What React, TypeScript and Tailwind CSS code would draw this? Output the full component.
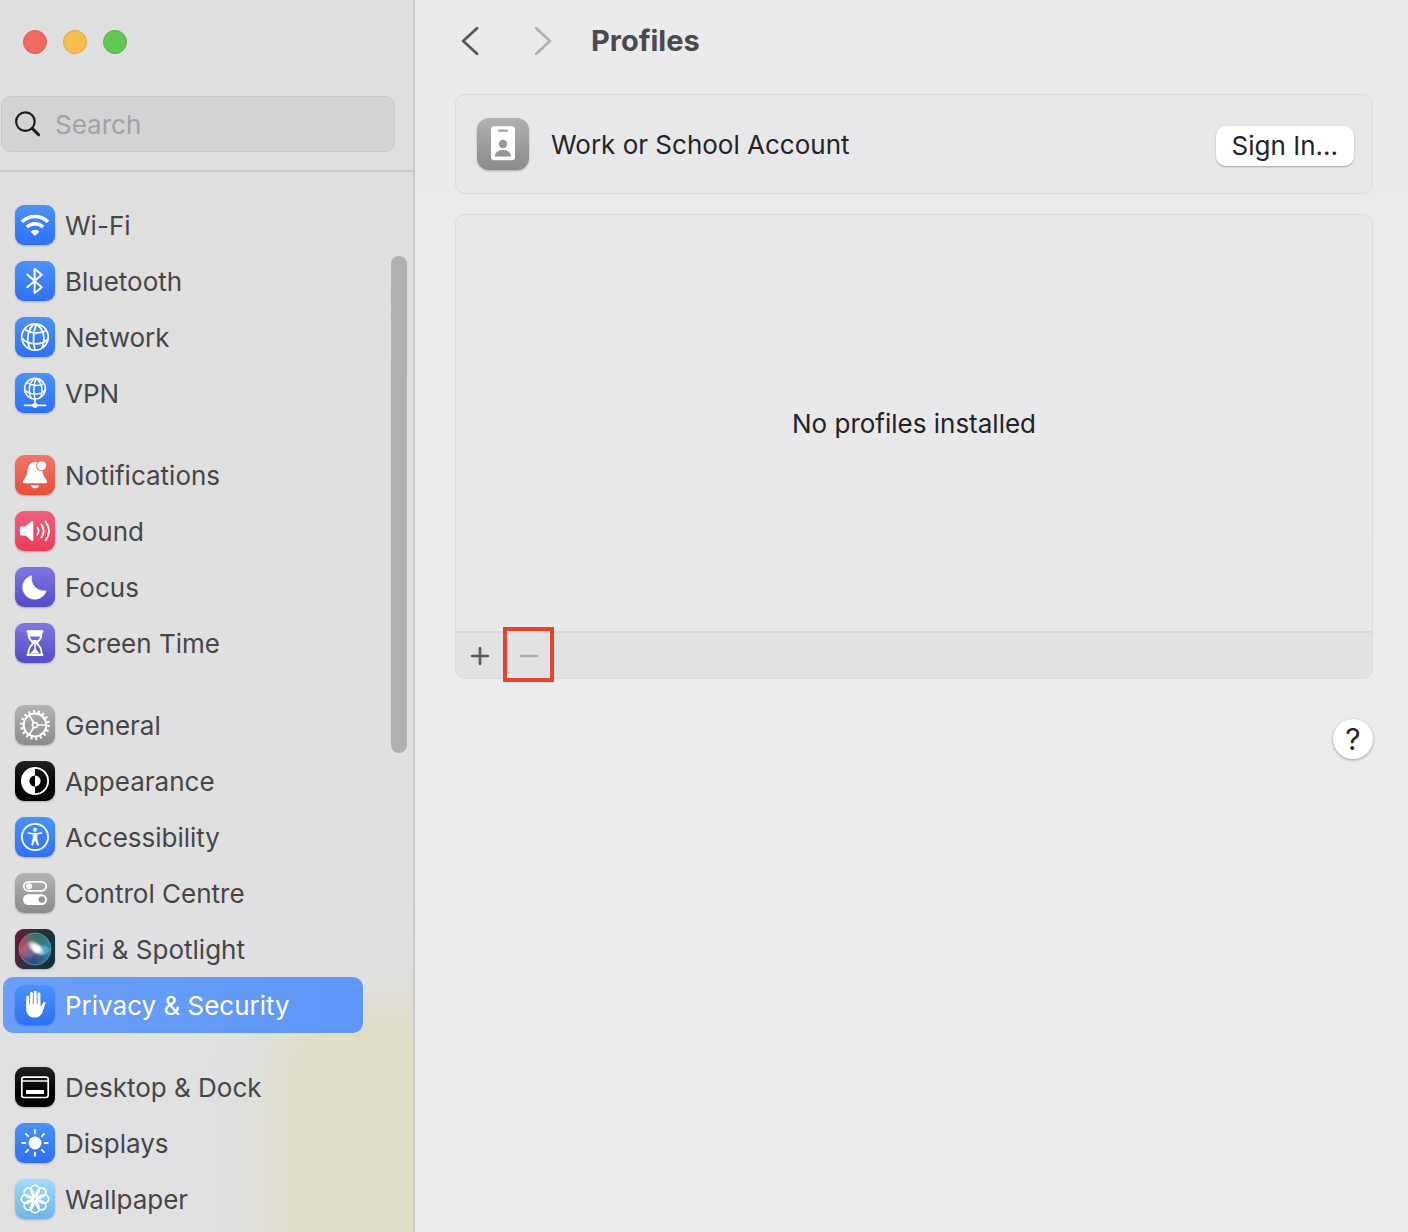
import { FC, ReactNode } from "react";
import clsx from "clsx";

type Item = {
  label: string;
  tile: string;
  icon: ReactNode;
  active?: boolean;
};

const BLUE = "bg-linear-to-b from-[#4b92f8] to-[#2f70f2]";
const GRAY = "bg-linear-to-b from-[#b3b3b3] to-[#8b8b8c]";
const BLACK = "bg-linear-to-b from-[#232324] to-[#000000]";
const PURPLE = "bg-linear-to-b from-[#7f78e2] to-[#524cc6]";

const GlobeLines: FC = () => (
  <>
    <circle cx="20" cy="20" r="13.2" />
    <path d="M19.6 7.2C12.6 11 10.6 24 15.4 32.2M21.8 7.2C18 13 17.6 27 20.4 33M21.4 7.2C29.4 12 31 24 26.2 31.8" />
    <path d="M9.5 12C15 16.4 25 17.4 31.5 13.4M7 21.4C13 28 27 29.2 33 21.6" />
  </>
);

const WifiIcon = (
  <>
    <path d="M7 16.8A18.6 18.6 0 0 1 33 16.8M11.9 22A11.6 11.6 0 0 1 28.1 22" fill="none" stroke="#fff" strokeWidth="3.5" />
    <path d="M20 31L15.6 26.7A6 6 0 0 1 24.4 26.7Z" fill="#fff" />
  </>
);

const BluetoothIcon = (
  <path d="M12.3 13.6L26.7 26.3L19.6 32.2V7.8L26.7 13.7L12.3 26.3" fill="none" stroke="#fff" strokeWidth="2" strokeLinecap="round" strokeLinejoin="round" />
);

const NetworkIcon = (
  <g fill="none" stroke="#fff" strokeWidth="1.7">
    <GlobeLines />
  </g>
);

const VpnIcon = (
  <>
    <g fill="none" stroke="#fff" strokeWidth="1.9" transform="translate(4.2 -.2) scale(.79)">
      <GlobeLines />
    </g>
    <path d="M20 26V32M9.5 32.4H30.5" stroke="#fff" strokeWidth="1.7" strokeLinecap="round" />
    <circle cx="20" cy="32.3" r="2.6" fill="#fff" />
  </>
);

const BellIcon = (
  <>
    <path d="M20 7C15 7 12.8 11 12.6 16C12.3 22 8 23.6 8 26.9C8 27.8 8.6 28.3 9.5 28.3H30.5C31.4 28.3 32 27.8 32 26.9C32 23.6 28 22 27.4 16C27 11 25 7 20 7Z" fill="#fff" />
    <path d="M16 30.2H24C23.6 32.2 22 33.3 20 33.3S16.4 32.2 16 30.2Z" fill="#fff" />
    <circle cx="26.6" cy="10.8" r="5.5" fill="#ee6a5b" />
    <circle cx="26.6" cy="10.8" r="4.5" fill="#fff" />
  </>
);

const SoundIcon = (
  <>
    <path d="M6.4 15.6H10.4L16.6 10.2C17.4 9.6 18.3 10 18.3 11V29C18.3 30 17.4 30.4 16.6 29.8L10.4 24.4H6.4C5.6 24.4 5 23.9 5 23V17C5 16.1 5.6 15.6 6.4 15.6Z" fill="#fff" />
    <path d="M22.4 16.4Q24.8 20 22.4 23.6M26.4 13.6Q31 20 26.4 26.4M30.6 10.6Q37.4 20 30.6 29.4" fill="none" stroke="#fff" strokeWidth="1.8" strokeLinecap="round" />
  </>
);

const MoonIcon = (
  <path d="M16.6 8.7A12 12 0 1 0 31.2 23.7A12.6 12.6 0 0 1 16.6 8.7Z" fill="#fff" stroke="#fff" strokeWidth=".6" strokeLinejoin="round" />
);

const HourglassIcon = (
  <>
    <path d="M13.4 8.4H26.6C26.6 14.5 25.5 16.3 21.6 20C25.5 24 26.6 26 26.6 31.8H13.4C13.4 26 14.5 24 18.4 20C14.5 16.3 13.4 14.5 13.4 8.4Z" fill="none" stroke="#fff" strokeWidth="1.8" />
    <path d="M12.6 8.4H27.4M12.6 31.9H27.4" stroke="#fff" strokeWidth="2.2" strokeLinecap="round" />
    <path d="M14 8.5H26V13.4H14ZM17.4 17H22.6L20.8 20V26L24.6 30.6H15.4L19.2 26V20Z" fill="#fff" />
  </>
);

const GearIcon = (
  <g fill="none" stroke="#fff">
    <circle cx="20" cy="20" r="11.4" strokeWidth="2" />
    <circle cx="20" cy="20" r="13.6" strokeWidth="2.6" strokeDasharray="2.1 2.647" />
    <circle cx="20" cy="20" r="2.6" strokeWidth="1.5" />
    <path d="M22.6 20H31M18.7 17.7L14.4 10.4M18.7 22.3L14.4 29.6" strokeWidth="1.7" />
  </g>
);

const AppearanceIcon = (
  <>
    <circle cx="20" cy="20" r="13.1" fill="none" stroke="#fff" strokeWidth="1.8" />
    <path d="M20 7A13 13 0 0 0 20 33V25.6A5.6 5.6 0 0 1 20 14.4Z" fill="#fff" />
    <path d="M20 14.4A5.6 5.6 0 0 1 20 25.6Z" fill="#fff" />
  </>
);

const AccessibilityIcon = (
  <>
    <circle cx="20" cy="20" r="13.1" fill="none" stroke="#fff" strokeWidth="1.8" />
    <circle cx="20" cy="12.8" r="2" fill="#fff" />
    <path d="M13.4 15.9L18 16.8H22L26.6 15.9" fill="none" stroke="#fff" strokeWidth="1.5" strokeLinecap="round" strokeLinejoin="round" />
    <path d="M18 16.4H22V21.4L23.6 27.9L22.4 28.4L20 22.8L17.6 28.4L16.4 27.9L18 21.4Z" fill="#fff" stroke="#fff" strokeWidth=".5" strokeLinejoin="round" />
  </>
);

const ControlIcon = (
  <>
    <rect x="8.8" y="8.8" width="22.4" height="9" rx="4.5" fill="none" stroke="#fff" strokeWidth="1.7" />
    <circle cx="14" cy="13.3" r="3.1" fill="#fff" />
    <rect x="8" y="21.2" width="24" height="10.8" rx="5.4" fill="#fff" />
    <circle cx="26.8" cy="26.6" r="3.3" fill="#969697" />
  </>
);

const SiriIcon = (
  <>
    <defs>
      <linearGradient id="siriBase" x1="0" y1="0" x2="1" y2="0.3">
        <stop offset="0" stopColor="#6b1838" />
        <stop offset=".5" stopColor="#33313f" />
        <stop offset="1" stopColor="#10333a" />
      </linearGradient>
      <linearGradient id="siriOrb" x1="0" y1=".3" x2="1" y2=".6">
        <stop offset="0" stopColor="#c2385c" />
        <stop offset=".4" stopColor="#7b6a80" />
        <stop offset=".7" stopColor="#3b8299" />
        <stop offset="1" stopColor="#2384b8" />
      </linearGradient>
      <radialGradient id="siriTop" cx=".6" cy=".05" r=".5">
        <stop offset="0" stopColor="#2b7562" />
        <stop offset="1" stopColor="#2b7562" stopOpacity="0" />
      </radialGradient>
      <radialGradient id="siriLow" cx=".45" cy=".95" r=".55">
        <stop offset="0" stopColor="#2c4288" />
        <stop offset="1" stopColor="#2c4288" stopOpacity="0" />
      </radialGradient>
      <radialGradient id="siriGlow">
        <stop offset="0" stopColor="#fff" />
        <stop offset=".45" stopColor="#fff" stopOpacity=".85" />
        <stop offset="1" stopColor="#bfeaff" stopOpacity="0" />
      </radialGradient>
    </defs>
    <rect width="40" height="40" rx="9" fill="url(#siriBase)" />
    <circle cx="20" cy="20" r="16" fill="url(#siriOrb)" />
    <circle cx="20" cy="20" r="16" fill="url(#siriTop)" />
    <circle cx="20" cy="20" r="16" fill="url(#siriLow)" />
    <circle cx="20" cy="20" r="16" fill="none" stroke="#6fae9f" strokeOpacity=".7" strokeWidth=".9" />
    <path d="M5 22C9 13 15 11 20 19C24 14 31 14 35 21C31 28 26 28 22 23C18 31 9 31 5 22Z" fill="#ff9db5" fillOpacity=".18" />
    <path d="M21 22C26 15 31 16 35 21C31 26 26 27 21 22Z" fill="#52b9ef" fillOpacity=".6" />
    <ellipse cx="21" cy="19" rx="11" ry="6" fill="url(#siriGlow)" transform="rotate(38 21 19)" />
    <circle cx="22" cy="20" r="5" fill="url(#siriGlow)" />
  </>
);

const HandIcon = (
  <>
    <path d="M12.7 12.2V22M16.4 8.4V22M20.2 7.2V22M24 9V22" stroke="#fff" strokeWidth="2.9" strokeLinecap="round" />
    <path d="M11.25 19H25.4V22.6L28.6 17.2C29.2 16.2 30.9 16.8 30.6 18L27.6 26.5C26.2 30.6 23.8 32.6 19.8 32.6C14.4 32.6 11.25 29.4 11.25 24Z" fill="#fff" />
  </>
);

const DockIcon = (
  <>
    <rect x="6.8" y="10.1" width="26.4" height="20.4" rx="2.2" fill="none" stroke="#fff" strokeWidth="1.7" />
    <path d="M7 14H33" stroke="#fff" strokeWidth="1.7" />
    <rect x="11" y="23" width="18" height="4" rx=".6" fill="#fff" />
  </>
);

const SunIcon = (
  <>
    <circle cx="20" cy="20" r="6.4" fill="#fff" />
    {[0, 45, 90, 135, 180, 225, 270, 315].map((a) => (
      <path key={a} d="M20 10.3V7.3" stroke="#fff" strokeWidth="1.9" strokeLinecap="round" transform={`rotate(${a} 20 20)`} />
    ))}
  </>
);

const FlowerIcon = (
  <g fill="none" stroke="#fff" strokeWidth="1.6">
    {[0, 45, 90, 135, 180, 225, 270, 315].map((a) => (
      <path key={a} d="M20 20C17.6 16.6 15.7 13.4 15.7 10.6A4.3 4.3 0 0 1 24.3 10.6C24.3 13.4 22.4 16.6 20 20Z" transform={`rotate(${a} 20 20)`} />
    ))}
    <circle cx="20" cy="20" r="1.8" fill="#8ac8ee" />
  </g>
);

const groups: Item[][] = [
  [
    { label: "Wi-Fi", tile: BLUE, icon: WifiIcon },
    { label: "Bluetooth", tile: BLUE, icon: BluetoothIcon },
    { label: "Network", tile: BLUE, icon: NetworkIcon },
    { label: "VPN", tile: BLUE, icon: VpnIcon },
  ],
  [
    { label: "Notifications", tile: "bg-linear-to-b from-[#f0766a] to-[#ea4b3a]", icon: BellIcon },
    { label: "Sound", tile: "bg-linear-to-b from-[#ee6080] to-[#ea3b57]", icon: SoundIcon },
    { label: "Focus", tile: PURPLE, icon: MoonIcon },
    { label: "Screen Time", tile: PURPLE, icon: HourglassIcon },
  ],
  [
    { label: "General", tile: GRAY, icon: GearIcon },
    { label: "Appearance", tile: BLACK, icon: AppearanceIcon },
    { label: "Accessibility", tile: BLUE, icon: AccessibilityIcon },
    { label: "Control Centre", tile: GRAY, icon: ControlIcon },
    { label: "Siri & Spotlight", tile: "bg-[#33313f]", icon: SiriIcon },
    { label: "Privacy & Security", tile: BLUE, icon: HandIcon, active: true },
  ],
  [
    { label: "Desktop & Dock", tile: BLACK, icon: DockIcon },
    { label: "Displays", tile: BLUE, icon: SunIcon },
    { label: "Wallpaper", tile: "bg-linear-to-b from-[#9fdcf6] to-[#70b4e6]", icon: FlowerIcon },
  ],
];

const SidebarItem: FC<{ item: Item }> = ({ item }) => (
  <li>
    <a
      href="#"
      aria-current={item.active ? "page" : undefined}
      className={clsx(
        "flex h-14 items-center gap-[10px] rounded-[10px] pl-3 text-[26px] whitespace-nowrap",
        item.active ? "bg-linear-to-r from-[#6a9ff9] to-[#5f96f8] text-white" : "text-[#464648]"
      )}
    >
      <span className={clsx("size-10 shrink-0 overflow-hidden rounded-[9px] shadow-[0_1px_2px_rgba(0,0,0,0.22)]", item.tile)}>
        <svg viewBox="0 0 40 40" className="size-10" aria-hidden="true">
          {item.icon}
        </svg>
      </span>
      {item.label}
    </a>
  </li>
);

const Sidebar: FC = () => (
  <aside className="relative isolate flex w-[415px] shrink-0 flex-col overflow-hidden border-r-2 border-[#c9c9cb] bg-linear-to-b from-[#dfdfdf] via-[#e0e0e1] to-[#e1e0e3]">
    {/* wallpaper tint showing through */}
    <div className="absolute -right-24 -bottom-24 -z-10 h-[328px] w-[240px] rounded-tl-[80px] bg-[#dfddc5] blur-[24px]" />

    <div className="flex h-[84px] items-center gap-4 pl-[23px]">
      <button aria-label="Close" className="size-6 rounded-full border border-[#dc5a50] bg-[#ec6a5e]" />
      <button aria-label="Minimise" className="size-6 rounded-full border border-[#e0a93e] bg-[#f4bf4f]" />
      <button aria-label="Zoom" className="size-6 rounded-full border border-[#53b143] bg-[#61c654]" />
    </div>

    <div className="border-b-2 border-[#c8c8ca] pt-3 pr-[18px] pb-[18px] pl-px">
      <label className="flex h-14 items-center gap-3 rounded-[10px] border border-[#c6c6c8] bg-[#d3d3d5] pl-[11px]">
        <svg viewBox="0 0 30 30" className="size-[30px]" fill="none" stroke="#1c1c1e" aria-hidden="true">
          <circle cx="12.4" cy="12.6" r="9.3" strokeWidth="2.2" />
          <path d="M19.2 19.4L25.6 25.8" strokeWidth="3" strokeLinecap="round" />
        </svg>
        <input
          type="text"
          aria-label="Search"
          placeholder="Search"
          className="min-w-0 flex-1 bg-transparent text-[26px] text-[#242426] outline-none placeholder:text-[#a2a2a4]"
        />
      </label>
    </div>

    <nav aria-label="Settings" className="relative flex-1 pt-[25px] pr-[50px] pl-[3px]">
      <div className="flex flex-col gap-[26px]">
        {groups.map((group) => (
          <ul key={group[0].label}>
            {group.map((item) => (
              <SidebarItem key={item.label} item={item} />
            ))}
          </ul>
        ))}
      </div>
      <div className="absolute top-[84px] right-[6px] h-[497px] w-4 rounded-full bg-[#b0b0b2]" />
    </nav>
  </aside>
);

const Profiles: FC = () => (
  <main className="flex min-w-0 flex-1 flex-col bg-linear-to-b from-[#ebebec] to-[#edebee] pr-[35px] pl-10">
    <header className="flex h-[82px] items-center">
      <button aria-label="Back" className="flex w-8 justify-center">
        <svg viewBox="0 0 20 30" className="h-[30px] w-5" fill="none" stroke="#59595b" strokeWidth="2.8" strokeLinecap="round" strokeLinejoin="round" aria-hidden="true">
          <path d="M16 2.2L2.2 15L16 27.8" />
        </svg>
      </button>
      <button aria-label="Forward" disabled className="ml-10 flex w-8 justify-center">
        <svg viewBox="0 0 20 30" className="h-[30px] w-5" fill="none" stroke="#b0b0b2" strokeWidth="2.8" strokeLinecap="round" strokeLinejoin="round" aria-hidden="true">
          <path d="M3.2 2.2L17 15L3.2 27.8" />
        </svg>
      </button>
      <h1 className="ml-8 text-[29px] font-bold text-[#4a4a4c]">Profiles</h1>
    </header>

    <section className="mt-3 flex h-[100px] items-center rounded-[10px] border border-[#dcdcde] bg-[#e8e8ea] pr-[18px] pl-[21px]">
      <span className="size-[52px] shrink-0 rounded-xl bg-linear-to-b from-[#b1b1b1] to-[#8a8a8a] shadow-[0_1px_2px_rgba(0,0,0,0.25)]">
        <svg viewBox="0 0 52 52" className="size-[52px]" aria-hidden="true">
          <rect x="14" y="8.3" width="24" height="34" rx="3" fill="#fff" />
          <rect x="21" y="11.4" width="10" height="2.4" rx="1.2" fill="#a0a0a0" />
          <circle cx="26" cy="26" r="4.2" fill="#9a9a9a" />
          <path d="M18 38.4C18 34.4 21.4 32 26 32S34 34.4 34 38.4Z" fill="#959595" />
        </svg>
      </span>
      <h2 className="ml-[22px] flex-1 text-[26px] text-[#242426]">Work or School Account</h2>
      <button className="mt-[3px] h-10 rounded-[10px] bg-white px-4 text-[26px] leading-[40px] text-[#242426] shadow-[0_1px_2px_rgba(0,0,0,0.3)]">Sign In...</button>
    </section>

    <section className="mt-5 rounded-[10px] border border-[#dcdcde] bg-[#e9e8ea]">
      <p className="flex h-[416px] items-center justify-center text-[26px] text-[#242426]">No profiles installed</p>
      <div className="flex h-[47px] rounded-b-[9px] border-t-2 border-[#d8d7d9] bg-[#e2e1e3]">
        <button aria-label="Add profile" className="flex w-[47px] items-center justify-center">
          <svg viewBox="0 0 20 20" className="size-5" stroke="#59595b" strokeWidth="2.6" strokeLinecap="round" aria-hidden="true">
            <path d="M2 10H18M10 2V18" />
          </svg>
        </button>
        <div className="relative flex w-[51px]">
          <button aria-label="Remove profile" disabled className="flex flex-1 items-center justify-center">
            <svg viewBox="0 0 20 20" className="size-5" stroke="#acacae" strokeWidth="2.6" strokeLinecap="round" aria-hidden="true">
              <path d="M2 10H18" />
            </svg>
          </button>
          <div className="pointer-events-none absolute inset-x-0 -top-[6px] -bottom-1 border-4 border-[#e5432b]" />
        </div>
      </div>
    </section>

    <button aria-label="Help" className="mt-10 size-10 self-end rounded-full bg-white text-[30px] leading-[40px] text-[#242426] shadow-[0_1px_3px_rgba(0,0,0,0.35)]">
      ?
    </button>
  </main>
);

const App: FC = () => (
  <div className="flex min-h-screen font-[Inter,'Liberation_Sans',sans-serif]">
    <Sidebar />
    <Profiles />
  </div>
);

export default App;
